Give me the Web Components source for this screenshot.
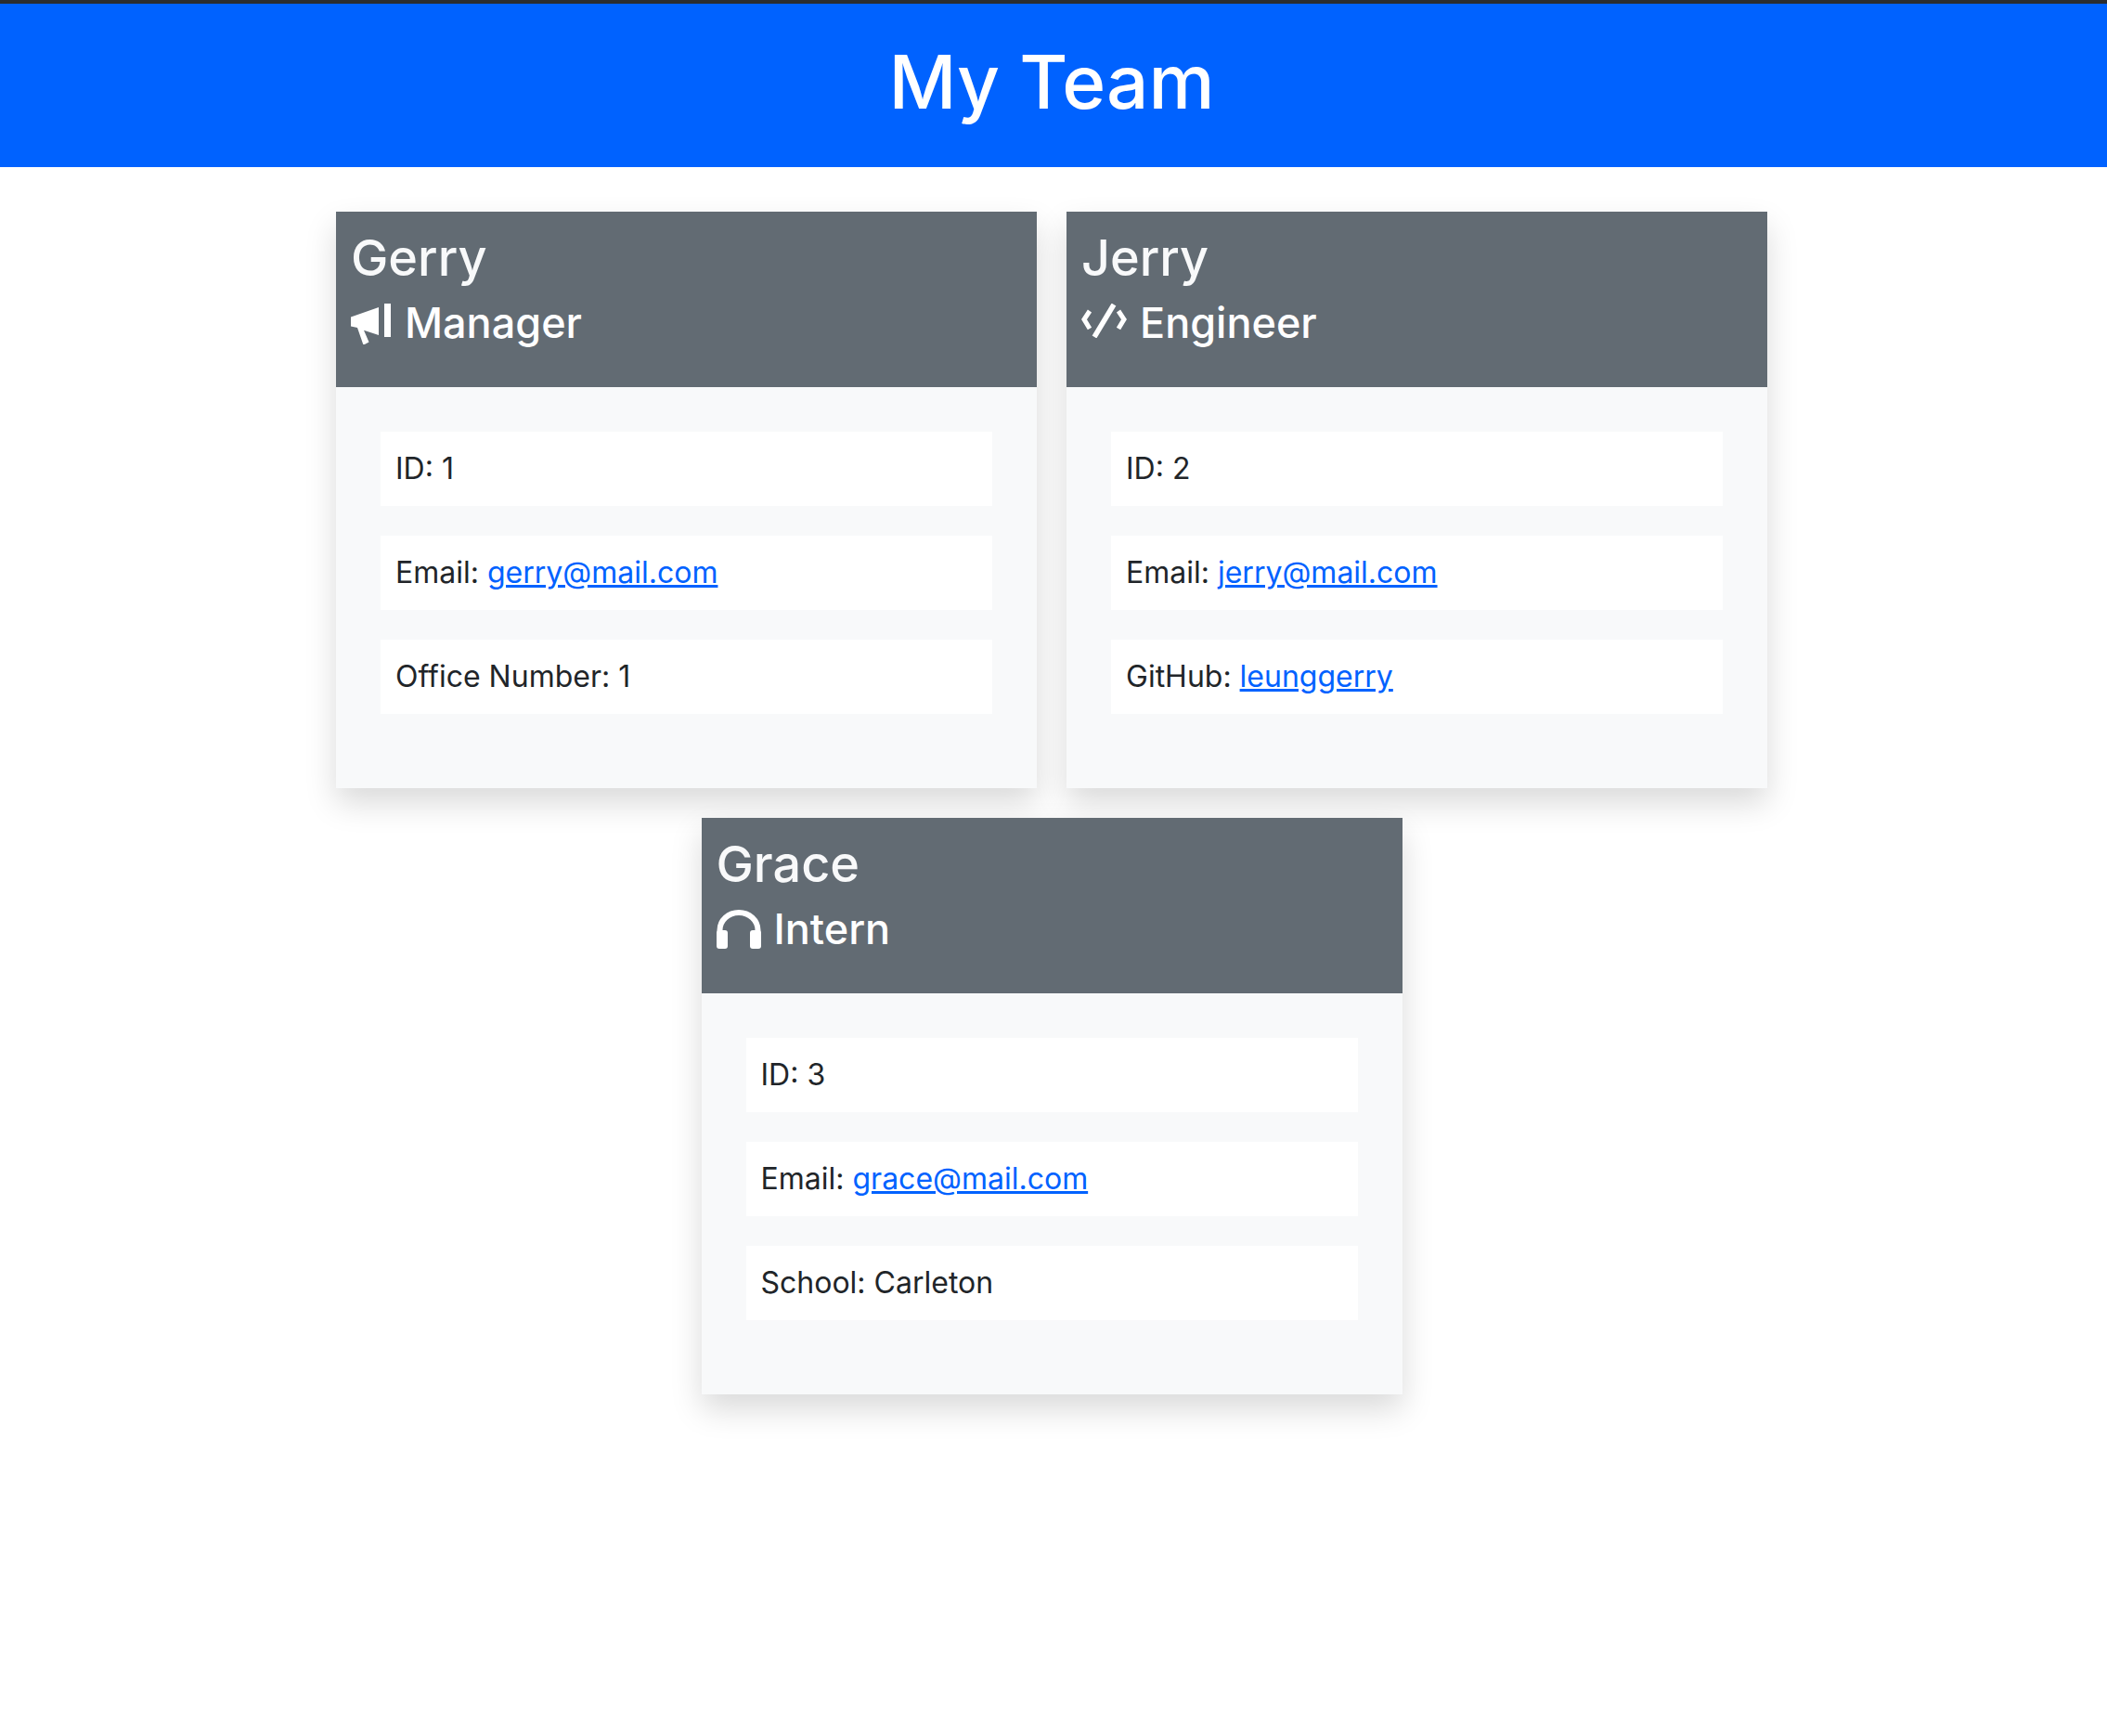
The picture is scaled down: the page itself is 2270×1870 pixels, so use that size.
<!DOCTYPE html>
<html lang="en">
<head>
<meta charset="utf-8">
<title>My Team</title>
<style>
    html, body { margin: 0; padding: 0; background: #fff; }
    body { font-family: Inter, "Liberation Sans", sans-serif; color: #212529; min-height: 1870px; }
</style>
</head>
<body>
<team-header>My Team</team-header>
<team-grid>
    <team-card name="Gerry" role="Manager">
        <svg slot="icon" width="44" height="44" viewBox="0 0 44 44"><path fill="currentColor" d="M0 14.500 30 4v30L14 28.700l5.500 12.800-6 3.200-6.500-18.700L0 24.500zM36 0h7v36h-7z"/></svg>
        <info-item>ID: 1</info-item>
        <info-item>Email: <a href="#">gerry@mail.com</a></info-item>
        <info-item>Office Number: 1</info-item>
    </team-card>
    <team-card name="Jerry" role="Engineer">
        <svg slot="icon" width="49" height="37" viewBox="0 0 49 37"><path fill="none" stroke="currentColor" stroke-width="5" d="M9 8 3 17l6 10M40 8l6 9-6 10"/><path fill="none" stroke="currentColor" stroke-width="5.500" d="M35 1 14 36"/></svg>
        <info-item>ID: 2</info-item>
        <info-item>Email: <a href="#">jerry@mail.com</a></info-item>
        <info-item>GitHub: <a href="#">leunggerry</a></info-item>
    </team-card>
    <team-card name="Grace" role="Intern">
        <svg slot="icon" width="48" height="42" viewBox="0 0 48 42"><path fill="none" stroke="currentColor" stroke-width="6" d="M3.500 26V22a20.500 19 0 0 1 41 0v4"/><rect y="22" width="12" height="20" rx="3" fill="currentColor"/><rect x="36" y="22" width="12" height="20" rx="3" fill="currentColor"/></svg>
        <info-item>ID: 3</info-item>
        <info-item>Email: <a href="#">grace@mail.com</a></info-item>
        <info-item>School: Carleton</info-item>
    </team-card>
</team-grid>
<script>
// Blue page banner
class TeamHeader extends HTMLElement {
    constructor() {
        super();
        this.attachShadow({ mode: 'open' });
    }

    connectedCallback() {
        this.shadowRoot.innerHTML = `
            <style>
                :host {
                    display: block;
                    height: 176px;
                    border-top: 4px solid #2b2d30;
                    background: #0062ff;
                    color: #fff;
                    box-sizing: content-box;
                }
                h1 {
                    margin: 0;
                    padding: 36px 4px 0 0;
                    font-size: 80px;
                    font-weight: 500;
                    line-height: 96px;
                    text-align: center;
                }
            </style>
            <h1><slot></slot></h1>
        `;
    }
}

// Wrapping, centred row of cards
class TeamGrid extends HTMLElement {
    constructor() {
        super();
        this.attachShadow({ mode: 'open' });
    }

    connectedCallback() {
        this.shadowRoot.innerHTML = `
            <style>
                :host {
                    display: flex;
                    flex-wrap: wrap;
                    justify-content: center;
                    gap: 32px;
                    padding: 48px 4px 0 0;
                }
            </style>
            <slot></slot>
        `;
    }
}

// One team member
class TeamCard extends HTMLElement {
    constructor() {
        super();
        this.attachShadow({ mode: 'open' });
    }

    connectedCallback() {
        this.shadowRoot.innerHTML = `
            <style>
                :host {
                    display: block;
                    width: 755px;
                    background: #f8f9fa;
                    box-shadow: 0 16px 32px rgba(0, 0, 0, 0.15);
                }
                .head {
                    height: 189px;
                    box-sizing: border-box;
                    padding: 16px;
                    background: #626b73;
                    color: #f8f9fa;
                }
                h2 {
                    margin: 0;
                    font-size: 54px;
                    font-weight: 500;
                    line-height: 67px;
                }
                h3 {
                    display: flex;
                    align-items: flex-start;
                    gap: 14px;
                    margin: 8px 0 0;
                    color: #fff;
                    font-size: 45px;
                    font-weight: 500;
                    line-height: 58px;
                }
                .icon { display: flex; padding-top: 8px; }
                .body {
                    display: flex;
                    flex-direction: column;
                    gap: 32px;
                    padding: 48px 48px 80px;
                }
            </style>
            <div class="head">
                <h2>${this.getAttribute('name')}</h2>
                <h3><span class="icon"><slot name="icon"></slot></span>${this.getAttribute('role')}</h3>
            </div>
            <div class="body"><slot></slot></div>
        `;
    }
}

// White row inside a card
class InfoItem extends HTMLElement {
    constructor() {
        super();
        this.attachShadow({ mode: 'open' });
    }

    connectedCallback() {
        this.shadowRoot.innerHTML = `
            <style>
                :host {
                    display: block;
                    height: 80px;
                    box-sizing: border-box;
                    padding: 0 16px;
                    background: #fff;
                    font-size: 32px;
                    line-height: 80px;
                }
                ::slotted(a) {
                    color: #0062ff;
                    text-decoration: underline;
                }
            </style>
            <slot></slot>
        `;
    }
}

customElements.define('team-header', TeamHeader);
customElements.define('team-grid', TeamGrid);
customElements.define('team-card', TeamCard);
customElements.define('info-item', InfoItem);
</script>
</body>
</html>
